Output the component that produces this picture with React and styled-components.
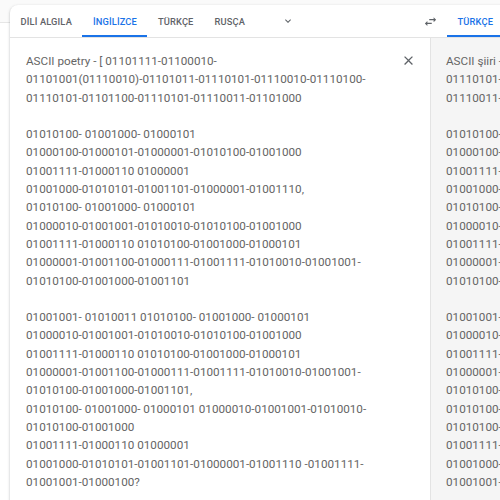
import styled, { createGlobalStyle } from "styled-components";

const GlobalStyle = createGlobalStyle`
    html, body {
        margin: 0;
        padding: 0;
        width: 500px;
        height: 500px;
        overflow: hidden;
        background: #ffffff;
        font-family: Roboto, "Liberation Sans", Arial, sans-serif;
    }
`;

const sourceLines = [
    "ASCII poetry - [ 01101111-01100010-",
    "01101001(01110010)-01101011-01110101-01110010-01110100-",
    "01110101-01101100-01110101-01110011-01101000",
    "",
    "01010100- 01001000- 01000101",
    "01000100-01000101-01000001-01010100-01001000",
    "01001111-01000110 01000001",
    "01001000-01010101-01001101-01000001-01001110,",
    "01010100- 01001000- 01000101",
    "01000010-01001001-01010010-01010100-01001000",
    "01001111-01000110 01010100-01001000-01000101",
    "01000001-01001100-01000111-01001111-01010010-01001001-",
    "01010100-01001000-01001101",
    "",
    "01001001- 01010011 01010100- 01001000- 01000101",
    "01000010-01001001-01010010-01010100-01001000",
    "01001111-01000110 01010100-01001000-01000101",
    "01000001-01001100-01000111-01001111-01010010-01001001-",
    "01010100-01001000-01001101,",
    "01010100- 01001000- 01000101 01000010-01001001-01010010-",
    "01010100-01001000",
    "01001111-01000110 01000001",
    "01001000-01010101-01001101-01000001-01001110 -01001111-",
    "01001001-01000100?",
];

const targetLines = [
    "ASCII şiiri - [ 01101111-01100010-01101001(01110010)-",
    "01110101-01110010-01110100-01110101-01101100-",
    "01110011-01101000",
    "",
    "01010100- 01001000- 01000101",
    "01000100-01000101-01000001-01010100-01001000",
    "01001111-01000110 01000001",
    "01001000-01010101-01001101-01000001-01001110,",
    "01010100- 01001000- 01000101",
    "01000010-01001001-01010010-01010100-01001000",
    "01001111-01000110 01010100-01001000-01000101",
    "01000001-01001100-01000111-01001111-01010010-01001001-",
    "01010100-01001000-01001101",
    "",
    "01001001- 01010011 01010100- 01001000- 01000101",
    "01000010-01001001-01010010-01010100-01001000",
    "01001111-01000110 01010100-01001000-01000101",
    "01000001-01001100-01000111-01001111-01010010-01001001-",
    "01010100-01001000-01001101,",
    "01010100- 01001000- 01000101 01000010-01001001-01010010-",
    "01010100-01001000-01001111-01000110 01000001",
    "01001111-01000110 01000001",
    "01001000-01010101-01001101-01000001-01001110 -01001111-",
    "01001001-01000100?",
];

const sourceTabs = ["DİLİ ALGILA", "İNGİLİZCE", "TÜRKÇE", "RUSÇA"];

export default function App() {
    return (
        <>
            <GlobalStyle />
            <Page>
                <TopBar />
                <Card>
                    <TabBar>
                        <LangGroup>
                            {sourceTabs.map((t) => (
                                <Tab key={t} $active={t === "İNGİLİZCE"}>{t}</Tab>
                            ))}
                            <MoreButton>
                                <svg width="12" height="12" viewBox="0 0 24 24">
                                    <path d="M16.59 8.59L12 13.17 7.41 8.59 6 10l6 6 6-6z" fill="#5f6368" />
                                </svg>
                            </MoreButton>
                        </LangGroup>
                        <SwapButton>
                            <svg width="15" height="15" viewBox="0 0 24 24">
                                <path d="M6.99 11L3 15l3.99 4v-3H14v-2H6.99v-3zM21 9l-3.99-4v3H10v2h7.01v3L21 9z" fill="#5f6368" />
                            </svg>
                        </SwapButton>
                        <TargetGroup>
                            <Tab $active $wide>TÜRKÇE</Tab>
                        </TargetGroup>
                    </TabBar>
                    <Panels>
                        <SourcePanel>
                            <TextBlock>
                                {sourceLines.map((l, i) => (
                                    <Line key={i}>{l || "\u00a0"}</Line>
                                ))}
                            </TextBlock>
                            <ClearButton>
                                <svg width="15" height="15" viewBox="0 0 24 24">
                                    <path d="M19 6.41L17.59 5 12 10.59 6.41 5 5 6.41 10.59 12 5 17.59 6.41 19 12 13.41 17.59 19 19 17.59 13.41 12z" fill="#5f6368" />
                                </svg>
                            </ClearButton>
                        </SourcePanel>
                        <TargetPanel>
                            <TextBlock>
                                {targetLines.map((l, i) => (
                                    <Line key={i}>{l || "\u00a0"}</Line>
                                ))}
                            </TextBlock>
                        </TargetPanel>
                    </Panels>
                </Card>
            </Page>
        </>
    );
}

const Page = styled.div`
    width: 500px;
    height: 500px;
    overflow: hidden;
    background: #ffffff;
`;

const TopBar = styled.div`
    height: 22px;
    background: #fafafa;
    border-bottom: 1px solid #e6e6e6;
`;

const Card = styled.div`
    margin: -18px 0 0 10px;
    width: 540px;
    height: 520px;
    background: #ffffff;
    border-radius: 8px 0 0 0;
    box-shadow: 0 1px 3px rgba(60, 64, 67, 0.25), 0 1px 2px rgba(60, 64, 67, 0.12);
    display: flex;
    flex-direction: column;
    overflow: hidden;
`;

const TabBar = styled.div`
    display: flex;
    align-items: stretch;
    height: 32px;
    border-bottom: 1px solid #e3e3e3;
    flex-shrink: 0;
`;

const LangGroup = styled.div`
    display: flex;
    width: 405px;
    flex-shrink: 0;
`;

const TargetGroup = styled.div`
    display: flex;
    padding-left: 2px;
    flex-shrink: 0;
`;

const Tab = styled.div`
    display: flex;
    align-items: center;
    padding: ${(p) => (p.$wide ? "0 40px 0 10.5px" : "0 10.5px")};
    font-size: 9.3px;
    font-weight: 500;
    letter-spacing: 0.15px;
    white-space: nowrap;
    color: ${(p) => (p.$active ? "#1a73e8" : "#5f6368")};
    box-shadow: ${(p) => (p.$active ? "inset 0 -2px 0 #1a73e8" : "none")};
`;

const MoreButton = styled.div`
    width: 64px;
    display: flex;
    align-items: center;
    justify-content: center;
`;

const SwapButton = styled.div`
    width: 30px;
    flex-shrink: 0;
    display: flex;
    align-items: center;
    justify-content: center;
    padding-top: 1px;
`;

const Panels = styled.div`
    display: flex;
    flex: 1;
`;

const SourcePanel = styled.div`
    position: relative;
    width: 420px;
    flex-shrink: 0;
    padding: 14px 0 0 16px;
    box-sizing: border-box;
`;

const TargetPanel = styled.div`
    flex: 1;
    background: #f5f5f5;
    border-left: 1px solid #e3e3e3;
    padding: 14px 0 0 15px;
    overflow: hidden;
`;

const TextBlock = styled.div`
    font-size: 11.7px;
    line-height: 18.3px;
    color: #656565;
    white-space: pre;
`;

const Line = styled.div``;

const ClearButton = styled.div`
    position: absolute;
    top: 15px;
    right: 14px;
    display: flex;
`;
